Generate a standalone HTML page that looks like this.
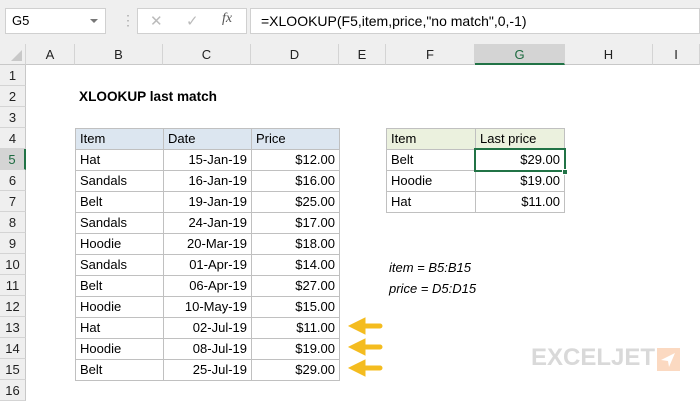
<!DOCTYPE html>
<html><head><style>
*{margin:0;padding:0;box-sizing:border-box}
body{width:700px;height:400px;overflow:hidden;background:#fff;font-family:"Liberation Sans",Arial,sans-serif;position:relative;font-size:13px;color:#000}
.a{position:absolute}
.hdr{position:absolute;top:44px;height:21px;background:#efefef;border-right:1px solid #d4d4d4;border-bottom:1px solid #c8c8c8;text-align:center;line-height:21px;font-size:13px;color:#222}
.rh{position:absolute;left:0;width:26px;height:21px;background:#efefef;border-bottom:1px solid #d4d4d4;border-right:1px solid #c8c8c8;text-align:center;line-height:21px;font-size:13px;color:#222}
.c{position:absolute;height:22px;border:1px solid #c0c0c0;line-height:20px;padding:0 4px;white-space:nowrap}
.r{text-align:right}
</style></head><body>
<div class="a" style="left:0;top:0;width:700px;height:44px;background:#efefef"></div>
<div class="a" style="left:5px;top:8px;width:101px;height:26px;background:#fff;border:1px solid #d0d0d0;line-height:24px;padding-left:6px">G5<span style="position:absolute;right:7px;top:10px;border-left:4px solid transparent;border-right:4px solid transparent;border-top:4px solid #777"></span></div>
<div class="a" style="left:121px;top:13px;color:#aaa;font-size:14px;line-height:14px">⋮</div>
<div class="a" style="left:137px;top:8px;width:110px;height:26px;background:#fff;border:1px solid #d0d0d0"></div>
<div class="a" style="left:150px;top:12px;color:#bbb;font-size:15px">✕</div>
<div class="a" style="left:186px;top:12px;color:#bbb;font-size:15px">✓</div>
<div class="a" style="left:222px;top:11px;color:#555;font-size:14px;font-style:italic;font-family:'Liberation Serif',serif">fx</div>
<div class="a" style="left:250px;top:8px;width:450px;height:26px;background:#fff;border:1px solid #d0d0d0;line-height:24px;padding-left:10px;font-size:14px">=XLOOKUP(F5,item,price,"no match",0,-1)</div>

<div class="hdr" style="left:0;width:26px"><span style="position:absolute;right:3px;bottom:3px;border-left:11px solid transparent;border-bottom:11px solid #c8c8c8"></span></div>
<div class="hdr" style="left:26px;width:49px">A</div>
<div class="hdr" style="left:75px;width:88px">B</div>
<div class="hdr" style="left:163px;width:88px">C</div>
<div class="hdr" style="left:251px;width:88px">D</div>
<div class="hdr" style="left:339px;width:47px">E</div>
<div class="hdr" style="left:386px;width:89px">F</div>
<div class="hdr" style="left:475px;width:90px;background:#d4d4d4;color:#1e6b41;border-bottom:2px solid #217346">G</div>
<div class="hdr" style="left:565px;width:88px">H</div>
<div class="hdr" style="left:653px;width:47px">I</div>

<div class="rh" style="top:65px">1</div>
<div class="rh" style="top:86px">2</div>
<div class="rh" style="top:107px">3</div>
<div class="rh" style="top:128px">4</div>
<div class="rh" style="top:149px;background:#d4d4d4;color:#1e6b41;border-right:2px solid #217346">5</div>
<div class="rh" style="top:170px">6</div>
<div class="rh" style="top:191px">7</div>
<div class="rh" style="top:212px">8</div>
<div class="rh" style="top:233px">9</div>
<div class="rh" style="top:254px">10</div>
<div class="rh" style="top:275px">11</div>
<div class="rh" style="top:296px">12</div>
<div class="rh" style="top:317px">13</div>
<div class="rh" style="top:338px">14</div>
<div class="rh" style="top:359px">15</div>
<div class="rh" style="top:380px">16</div>

<div class="a" style="left:79px;top:89px;font-weight:bold;font-size:13.6px">XLOOKUP last match</div>

<div class="c" style="left:75px;top:128px;width:89px;background:#dce6f0">Item</div>
<div class="c" style="left:163px;top:128px;width:89px;background:#dce6f0">Date</div>
<div class="c" style="left:251px;top:128px;width:89px;background:#dce6f0">Price</div>

<div class="c" style="left:75px;top:149px;width:89px">Hat</div><div class="c r" style="left:163px;top:149px;width:89px">15-Jan-19</div><div class="c r" style="left:251px;top:149px;width:89px">$12.00</div>
<div class="c" style="left:75px;top:170px;width:89px">Sandals</div><div class="c r" style="left:163px;top:170px;width:89px">16-Jan-19</div><div class="c r" style="left:251px;top:170px;width:89px">$16.00</div>
<div class="c" style="left:75px;top:191px;width:89px">Belt</div><div class="c r" style="left:163px;top:191px;width:89px">19-Jan-19</div><div class="c r" style="left:251px;top:191px;width:89px">$25.00</div>
<div class="c" style="left:75px;top:212px;width:89px">Sandals</div><div class="c r" style="left:163px;top:212px;width:89px">24-Jan-19</div><div class="c r" style="left:251px;top:212px;width:89px">$17.00</div>
<div class="c" style="left:75px;top:233px;width:89px">Hoodie</div><div class="c r" style="left:163px;top:233px;width:89px">20-Mar-19</div><div class="c r" style="left:251px;top:233px;width:89px">$18.00</div>
<div class="c" style="left:75px;top:254px;width:89px">Sandals</div><div class="c r" style="left:163px;top:254px;width:89px">01-Apr-19</div><div class="c r" style="left:251px;top:254px;width:89px">$14.00</div>
<div class="c" style="left:75px;top:275px;width:89px">Belt</div><div class="c r" style="left:163px;top:275px;width:89px">06-Apr-19</div><div class="c r" style="left:251px;top:275px;width:89px">$27.00</div>
<div class="c" style="left:75px;top:296px;width:89px">Hoodie</div><div class="c r" style="left:163px;top:296px;width:89px">10-May-19</div><div class="c r" style="left:251px;top:296px;width:89px">$15.00</div>
<div class="c" style="left:75px;top:317px;width:89px">Hat</div><div class="c r" style="left:163px;top:317px;width:89px">02-Jul-19</div><div class="c r" style="left:251px;top:317px;width:89px">$11.00</div>
<div class="c" style="left:75px;top:338px;width:89px">Hoodie</div><div class="c r" style="left:163px;top:338px;width:89px">08-Jul-19</div><div class="c r" style="left:251px;top:338px;width:89px">$19.00</div>
<div class="c" style="left:75px;top:359px;width:89px">Belt</div><div class="c r" style="left:163px;top:359px;width:89px">25-Jul-19</div><div class="c r" style="left:251px;top:359px;width:89px">$29.00</div>

<div class="c" style="left:386px;top:128px;width:90px;background:#ebf1de">Item</div>
<div class="c" style="left:475px;top:128px;width:90px;background:#ebf1de">Last price</div>
<div class="c" style="left:386px;top:149px;width:90px">Belt</div><div class="c r" style="left:475px;top:149px;width:90px">$29.00</div>
<div class="c" style="left:386px;top:170px;width:90px">Hoodie</div><div class="c r" style="left:475px;top:170px;width:90px">$19.00</div>
<div class="c" style="left:386px;top:191px;width:90px">Hat</div><div class="c r" style="left:475px;top:191px;width:90px">$11.00</div>
<div class="a" style="left:474px;top:148px;width:92px;height:24px;border:2px solid #217346"></div>
<div class="a" style="left:562px;top:169px;width:6px;height:6px;background:#217346;border:1px solid #fff"></div>

<div class="a" style="left:389px;top:260px;font-style:italic">item = B5:B15</div>
<div class="a" style="left:389px;top:281px;font-style:italic">price = D5:D15</div>

<svg class="a" style="left:348px;top:315px" width="36" height="66" viewBox="0 0 36 66">
<g fill="#f4bc1f" stroke="#f4bc1f">
<path d="M1 11 L17 3 L17 19 Z"/><line x1="12" y1="11" x2="32" y2="11" stroke-width="5" stroke-linecap="round"/>
<path d="M1 32 L17 24 L17 40 Z"/><line x1="12" y1="32" x2="32" y2="32" stroke-width="5" stroke-linecap="round"/>
<path d="M1 53 L17 45 L17 61 Z"/><line x1="12" y1="53" x2="32" y2="53" stroke-width="5" stroke-linecap="round"/>
</g></svg>

<div class="a" style="left:531px;top:345px;font-size:24px;font-weight:bold;color:#d9d9d9;letter-spacing:0px;line-height:26px">EXCELJET</div>
<svg class="a" style="left:657px;top:348px" width="23" height="23"><rect width="23" height="23" fill="#fbd9c1"/><path d="M4 12 L18 5 L12 19 L11 13 Z" fill="#fff"/></svg>
</body></html>
